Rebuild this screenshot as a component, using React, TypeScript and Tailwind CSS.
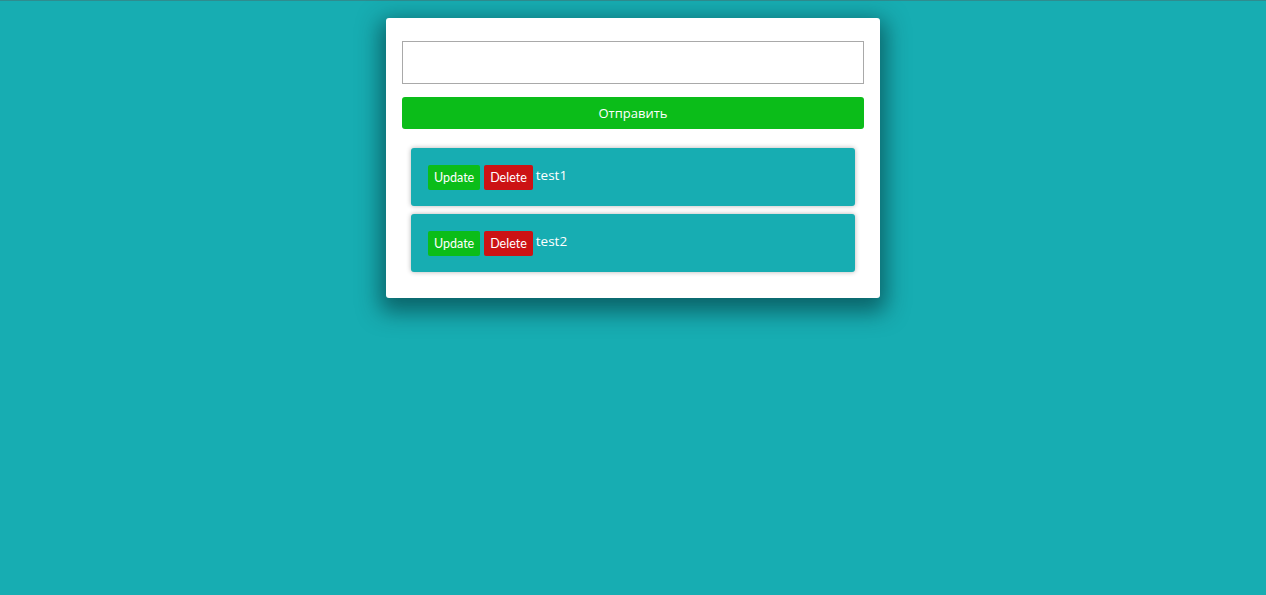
import { useState } from 'react'

type Todo = { id: number; title: string }

const initial: Todo[] = [
  { id: 1, title: 'test1' },
  { id: 2, title: 'test2' },
]

export default function App() {
  const [text, setText] = useState('')
  const [todos, setTodos] = useState<Todo[]>(initial)

  function add() {
    if (!text.trim()) return
    setTodos(t => [...t, { id: Date.now(), title: text }])
    setText('')
  }

  return (
    <div className="min-h-[595px] bg-[#17adb2] border-t border-[#2f8c8f] pt-[17px] font-['Open_Sans','Liberation_Sans',sans-serif]">
      <div className="mx-auto w-[494px] bg-white rounded-[3px] shadow-[0_8px_22px_6px_rgba(0,40,45,0.55)] px-4 pt-[23px] pb-[26px]">
        <input
          value={text}
          onChange={e => setText(e.target.value)}
          className="block w-full h-[43px] border border-[#a9a9a9] px-2 text-sm outline-none"
        />
        <button
          onClick={add}
          className="mt-[13px] w-full h-8 pt-[1px] rounded-[3px] bg-[#0bbd19] text-white text-[13px]"
        >
          Отправить
        </button>
        <div className="mt-[19px] px-[9px] flex flex-col gap-2">
          {todos.map(t => (
            <div key={t.id} className="h-[58px] bg-[#17adb2] rounded-[3px] shadow-[0_0_5px_rgba(0,0,0,0.3)] flex items-center px-[17px] pt-[1px]">
              <button className="h-[25px] px-[6px] pt-[1px] bg-[#0bbd19] rounded-[2px] text-white text-[12.5px] font-['Lato',sans-serif]">Update</button>
              <button className="ml-1 h-[25px] px-[6px] pt-[1px] bg-[#cc1214] rounded-[2px] text-white text-[12.5px] font-['Lato',sans-serif]">Delete</button>
              <span className="ml-[3px] -mt-[4px] text-white text-[13.5px]">{t.title}</span>
            </div>
          ))}
        </div>
      </div>
    </div>
  )
}
